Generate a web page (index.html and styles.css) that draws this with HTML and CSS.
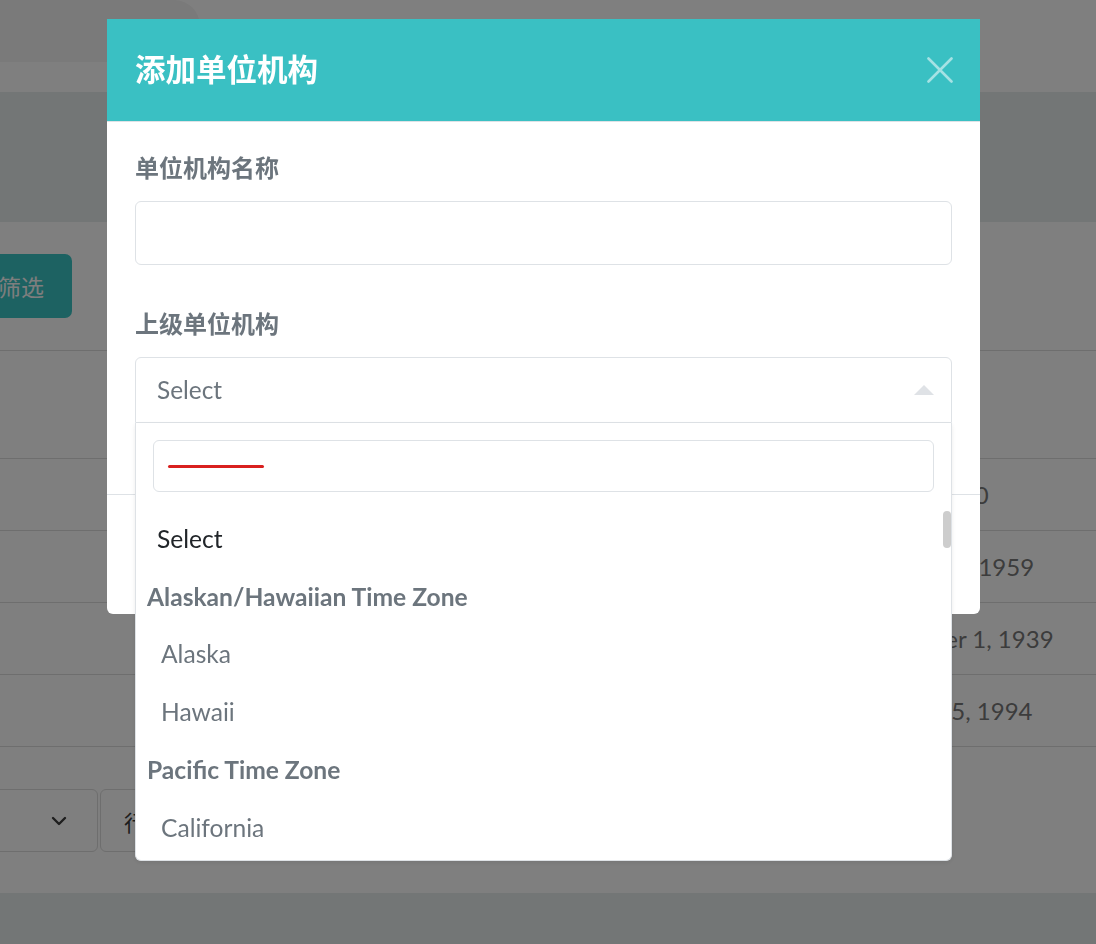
FILE: index.html
```html
<!DOCTYPE html>
<html lang="zh-CN">
<head>
  <meta charset="UTF-8" />
  <meta name="viewport" content="width=device-width, initial-scale=1.0" />
  <title>单位机构管理</title>
  <link rel="stylesheet" href="styles.css">
</head>
<body>

  <!-- === PAGE (sous le modal) === -->
  <div class="page">
    <header class="topbar">
      <div class="topbar-tab"></div>
    </header>
    <div class="topbar-strip"></div>
    <section class="page-head"></section>

    <main class="content">
      <div class="toolbar">
        <button class="btn-filter">筛选</button>
      </div>

      <table class="data-table">
        <thead>
          <tr><th class="col-name"></th><th></th></tr>
        </thead>
        <tbody>
          <tr><td class="col-name"></td><td>June 1, 1950</td></tr>
          <tr><td class="col-name"></td><td>January 14, 1959</td></tr>
          <tr><td class="col-name"></td><td>September 1, 1939</td></tr>
          <tr><td class="col-name"></td><td>February 5, 1994</td></tr>
        </tbody>
      </table>

      <div class="pager">
        <div class="pager-size">
          <svg width="16" height="12" viewBox="0 0 16 12"><path d="M2 3l6 6 6-6" fill="none" stroke="#3c3c3c" stroke-width="2.4" stroke-linecap="round" stroke-linejoin="round"/></svg>
        </div>
        <div class="pager-info">行 / 页</div>
      </div>
    </main>

    <footer class="page-foot"></footer>
  </div>

  <div class="backdrop"></div>

  <!-- === MODAL === -->
  <div class="modal-wrap">
    <div class="modal">
      <div class="modal-header">
        <h4 class="modal-title">添加单位机构</h4>
        <button class="close-btn">
          <svg width="26" height="26" viewBox="0 0 26 26"><path d="M1.5 1.5l23 23M24.5 1.5l-23 23" stroke="#fff" stroke-width="2.6" stroke-linecap="round"/></svg>
        </button>
      </div>

      <div class="modal-body">
        <div class="form-group">
          <label class="form-label">单位机构名称</label>
          <input class="form-control" type="text">
        </div>

        <div class="form-group last">
          <label class="form-label">上级单位机构</label>
          <div class="select-wrap">
            <div class="select-box">
              <span>Select</span>
              <span class="caret-up"></span>
            </div>

            <div class="dropdown">
              <div class="dropdown-search">
                <div class="search-input"><span class="search-mark"></span></div>
              </div>
              <ul class="option-list">
                <li class="opt opt-placeholder">Select</li>
                <li class="opt opt-group">Alaskan/Hawaiian Time Zone</li>
                <li class="opt opt-child">Alaska</li>
                <li class="opt opt-child">Hawaii</li>
                <li class="opt opt-group">Pacific Time Zone</li>
                <li class="opt opt-child">California</li>
              </ul>
              <div class="scroll-thumb"></div>
            </div>
          </div>
        </div>
      </div>

      <div class="modal-footer">
        <button class="btn-cancel">取消</button>
        <button class="btn-save">保存</button>
      </div>
    </div>
  </div>

</body>
</html>
```

FILE: styles.css
```css
* {
  margin: 0;
  padding: 0;
  box-sizing: border-box;
}

body {
  font-family: Lato, "Noto Sans CJK SC", sans-serif;
  background: #ffffff;
  color: #212529;
  width: 1096px;
  height: 944px;
  overflow: hidden;
}

button {
  font-family: inherit;
  cursor: pointer;
}

/* === PAGE === */
.page {
  display: flex;
  flex-direction: column;
  height: 944px;
  overflow: hidden;
}

.topbar {
  height: 62px;
  background: #ffffff;
}

.topbar-tab {
  width: 200px;
  height: 62px;
  background: #f4f4f4;
  border-top-right-radius: 26px;
}

.topbar-strip {
  height: 30px;
  background: #ffffff;
}

.page-head {
  height: 130px;
  background: #e6ecec;
}

.content {
  height: 671px;
  background: #ffffff;
}

.toolbar {
  height: 128px;
  padding-top: 32px;
}

.btn-filter {
  height: 64px;
  width: 130px;
  margin-left: -58px;
  border: none;
  border-radius: 7px;
  background: #3ac4c4;
  color: #fdfdfd;
  font-size: 23px;
  text-align: left;
  padding-left: 56px;
}

.data-table {
  width: 100%;
  border-collapse: collapse;
  font-size: 24px;
  color: #787878;
  white-space: nowrap;
}

.data-table thead tr {
  height: 108px;
  border-top: 1px solid #dcdcdc;
}

.data-table tr {
  border-bottom: 1px solid #dcdcdc;
}

.data-table tbody tr {
  height: 72px;
}

.data-table td {
  padding: 0;
}

.col-name {
  width: 852px;
}

.pager {
  display: flex;
  margin-top: 42px;
  height: 63px;
}

.pager-size {
  width: 200px;
  margin-left: -102px;
  border: 1px solid #dcdcdc;
  border-radius: 6px;
  display: flex;
  align-items: center;
  justify-content: flex-end;
  padding: 0 30px 0 20px;
}

.pager-info {
  margin-left: 2px;
  border: 1px solid #dcdcdc;
  border-radius: 6px;
  display: flex;
  align-items: center;
  padding: 0 23px;
  font-size: 22px;
  color: #3c3c3c;
}

.page-foot {
  flex: 1;
  background: #e6ecec;
}

/* === BACKDROP === */
.backdrop {
  position: fixed;
  inset: 0;
  background: rgba(0, 0, 0, 0.5);
}

/* === MODAL === */
.modal-wrap {
  position: fixed;
  inset: 0;
  padding: 19px 0 0 107px;
}

.modal {
  width: 873px;
  background: #ffffff;
  border-radius: 0 0 6px 6px;
}

.modal-header {
  height: 103px;
  background: #3ac0c3;
  border-bottom: 1px solid #dee2e6;
  padding: 0 28px;
  display: flex;
  align-items: center;
  justify-content: space-between;
}

.modal-title {
  font-size: 30.5px;
  font-weight: 700;
  color: #ffffff;
  line-height: 1;
  margin-top: -1px;
}

.close-btn {
  border: none;
  background: none;
  opacity: 0.55;
  display: flex;
  margin: 0 -1px 0 0;
}

.modal-body {
  padding: 28px 28px 28px;
}

.form-group {
  margin-bottom: 41px;
}

.form-group.last {
  margin-bottom: 43px;
}

.form-label {
  display: block;
  font-size: 24px;
  line-height: 36px;
  font-weight: 700;
  color: #6c757d;
  margin-bottom: 15px;
}

.form-control {
  display: block;
  width: 100%;
  height: 64px;
  border: 1px solid #dee2e6;
  border-radius: 6px;
  outline: none;
}

.select-wrap {
  position: relative;
}

.select-box {
  height: 66px;
  border: 1px solid #dee2e6;
  border-radius: 6px 6px 0 0;
  display: flex;
  align-items: center;
  justify-content: space-between;
  padding: 0 17px 2px 21px;
  font-size: 24.4px;
  color: #6c757d;
}

.caret-up {
  width: 0;
  height: 0;
  border-left: 10px solid transparent;
  border-right: 10px solid transparent;
  border-bottom: 10px solid #dfe2e6;
  margin-top: 2px;
}

/* === DROPDOWN === */
.dropdown {
  position: absolute;
  top: 66px;
  left: 0;
  right: 0;
  height: 438px;
  background: #ffffff;
  border: 1px solid #dee2e6;
  border-top: none;
  border-radius: 0 0 6px 6px;
  box-shadow: 0 2px 4px rgba(0, 0, 0, 0.08);
  z-index: 5;
}

.dropdown-search {
  padding: 17px 17px 18px;
}

.search-input {
  height: 52px;
  border: 1px solid #dee2e6;
  border-radius: 6px;
  display: flex;
  align-items: center;
  padding-left: 14px;
}

.search-mark {
  width: 96px;
  height: 3px;
  background: #d9201f;
  border-radius: 2px;
}

.option-list {
  list-style: none;
  height: 350px;
  overflow: hidden;
  font-size: 24.6px;
}

.opt {
  height: 57.8px;
  display: flex;
  align-items: center;
  padding-bottom: 1px;
  color: #6c757d;
}

.opt-placeholder {
  padding-left: 21px;
  color: #212529;
}

.opt-group {
  padding-left: 11px;
  font-weight: 700;
}

.opt-child {
  padding-left: 25px;
}

.scroll-thumb {
  position: absolute;
  right: 0;
  top: 88px;
  width: 8px;
  height: 37px;
  background: #cdcdcd;
  border-radius: 4px;
}

.modal-footer {
  height: 120px;
  border-top: 1px solid #dee2e6;
  display: flex;
  align-items: center;
  justify-content: flex-end;
  gap: 12px;
  padding: 0 28px;
}

.modal-footer button {
  height: 56px;
  padding: 0 30px;
  font-size: 22px;
  border-radius: 6px;
}

.btn-cancel {
  border: 1px solid #dee2e6;
  background: #ffffff;
  color: #6c757d;
}

.btn-save {
  border: 1px solid #3ac0c3;
  background: #3ac0c3;
  color: #ffffff;
}
```
